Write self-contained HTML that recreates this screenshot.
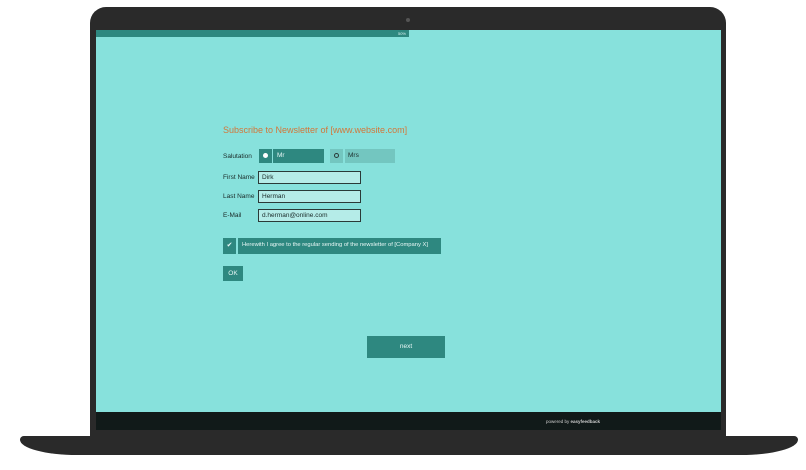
<!DOCTYPE html>
<html><head><style>
*{margin:0;padding:0;box-sizing:border-box}
body{width:806px;height:470px;background:#fff;position:relative;overflow:hidden;font-family:"Liberation Sans",sans-serif;font-size:6.5px;color:#1a2a28}
.a{position:absolute;white-space:nowrap}
.dk{background:#2e8880;color:#e8f8f6}
.inp{background:#b5ece8;border:1px solid #2a3a38;height:13px;left:258px;width:103px;padding:2px 0 0 3px;font-size:6.5px}
.lbl{left:223px}
</style></head><body>
<div class="a" style="left:20px;top:436px;width:778px;height:19px;background:#2a2a2a;border-radius:4px 4px 60px 60px/4px 4px 16px 16px"></div>
<div class="a" style="left:90px;top:7px;width:636px;height:431px;background:#2a2a2a;border-radius:16px 16px 0 0"></div>
<div class="a" style="left:406px;top:18px;width:4px;height:4px;border-radius:50%;background:#555"></div>
<div class="a" style="left:96px;top:30px;width:625px;height:382px;background:#87e1dc"></div>
<div class="a" style="left:96px;top:30px;width:313px;height:7px;background:#2e8880;color:#d8f0ee;font-size:4px;text-align:right;padding-right:3px;line-height:7px">50%</div>
<div class="a" style="left:96px;top:412px;width:625px;height:18px;background:#111a19;color:#ccc;font-size:4.5px;padding:7px 0 0 450px">powered by <b>easyfeedback</b></div>
<div class="a" style="left:223px;top:125px;font-size:9px;color:#d2773a">Subscribe to Newsletter of [www.website.com]</div>
<div class="a lbl" style="top:153px">Salutation</div>
<div class="a dk" style="left:259px;top:149px;width:13px;height:14px"><div class="a" style="left:4px;top:4px;width:5px;height:5px;border-radius:50%;background:#fff"></div></div>
<div class="a dk" style="left:273px;top:149px;width:51px;height:14px;padding:3px 0 0 4px">Mr</div>
<div class="a" style="left:330px;top:149px;width:13px;height:14px;background:#73c6c0"><div class="a" style="left:4px;top:4px;width:5px;height:5px;border-radius:50%;border:1px solid #2a3a38"></div></div>
<div class="a" style="left:345px;top:149px;width:50px;height:14px;background:#73c6c0;padding:3px 0 0 3px">Mrs</div>
<div class="a lbl" style="top:174px">First Name</div>
<div class="a inp" style="top:171px">Dirk</div>
<div class="a lbl" style="top:193px">Last Name</div>
<div class="a inp" style="top:190px">Herman</div>
<div class="a lbl" style="top:212px">E-Mail</div>
<div class="a inp" style="top:209px">d.herman@online.com</div>
<div class="a dk" style="left:223px;top:238px;width:13px;height:16px;font-size:7px;text-align:center;line-height:16px">✔</div>
<div class="a dk" style="left:238px;top:238px;width:203px;height:16px;padding:4px 0 0 4px;font-size:5.8px">Herewith I agree to the regular sending of the newsletter of [Company X]</div>
<div class="a dk" style="left:223px;top:266px;width:20px;height:15px;text-align:center;line-height:15px">OK</div>
<div class="a dk" style="left:367px;top:336px;width:78px;height:22px;text-align:center;line-height:22px">next</div>
</body></html>
